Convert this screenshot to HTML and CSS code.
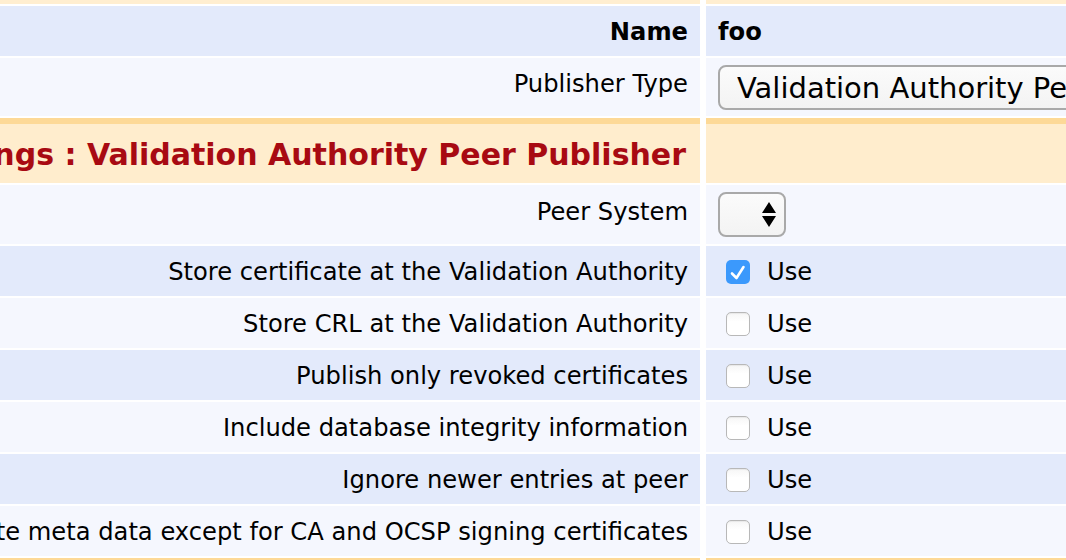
FILE: index.html
```html
<!DOCTYPE html>
<html>
<head>
<meta charset="utf-8">
<link rel="stylesheet" href="styles.css">
</head>
<body>
<div class="form">
  <div class="cell strip"></div><div class="cell strip"></div>

  <div class="cell label row-name bold">Name</div>
  <div class="cell value row-name bold">foo</div>

  <div class="cell label row-type">Publisher Type</div>
  <div class="cell value row-type">
    <select class="select select-wide"><option>Validation Authority Peer Publisher</option></select>
  </div>

  <div class="cell section title"><span>Settings : Validation Authority Peer Publisher</span></div>
  <div class="cell section"></div>

  <div class="cell label row-peer">Peer System</div>
  <div class="cell value row-peer">
    <span class="select-wrap">
      <select class="select select-small"><option></option></select>
      <svg class="arrows" width="14" height="26" viewBox="0 0 14 26"><path d="M7 0 L14 11 L0 11 Z M0 14 L14 14 L7 25 Z" fill="#000"/></svg>
    </span>
  </div>

  <div class="cell label row-check alt">Store certificate at the Validation Authority</div>
  <div class="cell value row-check alt"><span class="box checked"><svg width="24" height="24" viewBox="0 0 24 24"><path d="M6 13.5 L10.5 18 L17.5 7" fill="none" stroke="#fff" stroke-width="2.6" stroke-linecap="round" stroke-linejoin="round"/></svg></span><span class="use">Use</span></div>

  <div class="cell label row-check">Store CRL at the Validation Authority</div>
  <div class="cell value row-check"><span class="box"></span><span class="use">Use</span></div>

  <div class="cell label row-check alt">Publish only revoked certificates</div>
  <div class="cell value row-check alt"><span class="box"></span><span class="use">Use</span></div>

  <div class="cell label row-check">Include database integrity information</div>
  <div class="cell value row-check"><span class="box"></span><span class="use">Use</span></div>

  <div class="cell label row-check alt">Ignore newer entries at peer</div>
  <div class="cell value row-check alt"><span class="box"></span><span class="use">Use</span></div>

  <div class="cell label row-check">Don't store private meta data except for CA and OCSP signing certificates</div>
  <div class="cell value row-check"><span class="box"></span><span class="use">Use</span></div>

  <div class="cell section end"></div><div class="cell section end"></div>
</div>
</body>
</html>
```

FILE: styles.css
```css
html, body {
  margin: 0;
  padding: 0;
  overflow: hidden;
  background: #ffffff;
}
body {
  width: 1066px;
  height: 560px;
  font-family: "DejaVu Sans", Verdana, sans-serif;
  font-size: 24.2px;
  color: #000;
}
.form {
  display: grid;
  grid-template-columns: 700px 1fr;
  column-gap: 6px;
  row-gap: 2px;
}
.cell {
  display: flex;
  align-items: center;
  min-width: 0;
  white-space: nowrap;
  box-sizing: border-box;
}
.label {
  justify-content: flex-end;
  padding-right: 12px;
  background: #f5f7fe;
}
.value {
  justify-content: flex-start;
  padding-left: 12px;
  background: #f5f7fe;
}
.bold { font-weight: bold; }
.strip { height: 4px; background: #ffeed0; }
.row-name { height: 50px; background: #e3eafb; padding-top: 2px; }
.row-type { height: 58px; }
.row-type.label { padding-bottom: 6px; }
.row-peer { height: 59px; }
.row-peer.label { padding-bottom: 6px; }
.row-check { height: 50px; padding-top: 2px; }
.alt { background: #e3eafb; }
.section {
  background: #ffedcd;
  border-top: 6px solid #fdd997;
  height: 65px;
}
.section.end { height: 10px; border-top-width: 2px; }
.title {
  justify-content: flex-end;
  padding-right: 14px;
  padding-top: 1px;
  color: #a80a12;
  font-weight: bold;
  font-size: 30px;
  overflow: visible;
}
.select {
  -webkit-appearance: none;
  appearance: none;
  font-family: "DejaVu Sans", Verdana, sans-serif;
  color: #000;
  background: linear-gradient(#fbfbfb, #f3f3f3);
  border: 2px solid #a9a9a9;
  border-radius: 8px;
  margin: 0;
  box-sizing: border-box;
}
.select-wide {
  font-size: 29px;
  width: 520px;
  height: 45px;
  padding: 0 0 0 17px;
  margin-top: 1px;
}
.select-small {
  width: 68px;
  height: 45px;
  font-size: 24px;
  padding: 0;
  display: block;
}
.select-wrap {
  position: relative;
  display: inline-block;
}
.arrows {
  position: absolute;
  left: 44px;
  top: 10px;
}
.box {
  width: 24px;
  height: 24px;
  box-sizing: border-box;
  border: 1px solid #b8b8b8;
  border-radius: 5px;
  background: linear-gradient(#f6f6f6, #ffffff 40%);
  box-shadow: inset 0 1px 1px rgba(0,0,0,0.06);
  margin-left: 8px;
  flex: none;
  display: block;
}
.box.checked {
  border: none;
  background: #3b99fc;
  box-shadow: none;
}
.box svg { display: block; }
.use { margin-left: 17px; }
```
